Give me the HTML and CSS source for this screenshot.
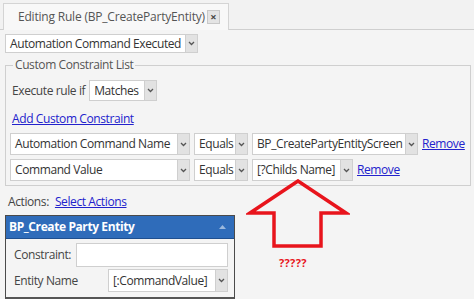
FILE: index.html
```html
<!DOCTYPE html>
<html>
<head>
    <title>Editing Rule</title>
    <link rel="stylesheet" href="styles.css">
</head>
<body>
    <div class="tab-bar">
        <div class="tab">
            <span class="tab-title">Editing Rule (BP_CreatePartyEntity)</span>
            <span class="tab-close">&#215;</span>
        </div>
    </div>

    <div class="page">
        <div class="dropdown event-select">
            <span class="value">Automation Command Executed</span>
            <span class="arrow"><svg width="7" height="5" viewBox="0 0 7 5"><path d="M1 1 L3.5 3.5 L6 1" fill="none" stroke="#555" stroke-width="1.3"/></svg></span>
        </div>

        <fieldset class="constraint-list">
            <legend>Custom Constraint List</legend>
            <div class="row row-mode">
                <span class="label">Execute rule if</span>
                <div class="dropdown w-matches">
                    <span class="value">Matches</span>
                    <span class="arrow"><svg width="7" height="5" viewBox="0 0 7 5"><path d="M1 1 L3.5 3.5 L6 1" fill="none" stroke="#555" stroke-width="1.3"/></svg></span>
                </div>
            </div>
            <div class="row row-add">
                <a class="link" href="#">Add Custom Constraint</a>
            </div>
            <div class="row row-constraint">
                <div class="dropdown w-field">
                    <span class="value">Automation Command Name</span>
                    <span class="arrow"><svg width="7" height="5" viewBox="0 0 7 5"><path d="M1 1 L3.5 3.5 L6 1" fill="none" stroke="#555" stroke-width="1.3"/></svg></span>
                </div>
                <div class="dropdown w-op">
                    <span class="value">Equals</span>
                    <span class="arrow"><svg width="7" height="5" viewBox="0 0 7 5"><path d="M1 1 L3.5 3.5 L6 1" fill="none" stroke="#555" stroke-width="1.3"/></svg></span>
                </div>
                <div class="dropdown w-screen">
                    <span class="value">BP_CreatePartyEntityScreen</span>
                    <span class="arrow"><svg width="7" height="5" viewBox="0 0 7 5"><path d="M1 1 L3.5 3.5 L6 1" fill="none" stroke="#555" stroke-width="1.3"/></svg></span>
                </div>
                <a class="link" href="#">Remove</a>
            </div>
            <div class="row row-constraint">
                <div class="dropdown w-field">
                    <span class="value">Command Value</span>
                    <span class="arrow"><svg width="7" height="5" viewBox="0 0 7 5"><path d="M1 1 L3.5 3.5 L6 1" fill="none" stroke="#555" stroke-width="1.3"/></svg></span>
                </div>
                <div class="dropdown w-op">
                    <span class="value">Equals</span>
                    <span class="arrow"><svg width="7" height="5" viewBox="0 0 7 5"><path d="M1 1 L3.5 3.5 L6 1" fill="none" stroke="#555" stroke-width="1.3"/></svg></span>
                </div>
                <div class="dropdown w-child">
                    <span class="value">[?Childs Name]</span>
                    <span class="arrow"><svg width="7" height="5" viewBox="0 0 7 5"><path d="M1 1 L3.5 3.5 L6 1" fill="none" stroke="#555" stroke-width="1.3"/></svg></span>
                </div>
                <a class="link" href="#">Remove</a>
            </div>
        </fieldset>

        <div class="actions-line">
            <span class="label">Actions:</span>
            <a class="link" href="#">Select Actions</a>
        </div>

        <div class="action-panel">
            <div class="panel-header">
                <span>BP_Create Party Entity</span>
                <svg class="collapse" width="7" height="4" viewBox="0 0 7 4"><path d="M0 4 L3.5 0 L7 4 Z" fill="#9bb8dd"/></svg>
            </div>
            <div class="panel-body">
                <div class="field-row">
                    <span class="label">Constraint:</span>
                    <div class="text-input"></div>
                </div>
                <div class="field-row">
                    <span class="label">Entity Name</span>
                    <div class="dropdown w-entity">
                        <span class="value">[:CommandValue]</span>
                        <span class="arrow"><svg width="7" height="5" viewBox="0 0 7 5"><path d="M1 1 L3.5 3.5 L6 1" fill="none" stroke="#555" stroke-width="1.3"/></svg></span>
                    </div>
                </div>
            </div>
        </div>

        <!-- annotation drawn over the screenshot -->
        <svg class="annotation-arrow" width="104" height="70" viewBox="0 0 104 70">
            <path d="M52 2 L4 34 L28 34 L28 67 L75 67 L75 34 L100 34 Z" fill="none" stroke="#e8141c" stroke-width="3.5" stroke-linejoin="miter"/>
        </svg>
        <span class="annotation-text">?????</span>
    </div>
</body>
</html>
```

FILE: styles.css
```css
body {
    margin: 0;
    background-color: #f4f4f4;
    font-family: "Open Sans", "Noto Sans", sans-serif;
    font-size: 12px;
    letter-spacing: -0.4px;
    line-height: 16px;
    color: #333;
    width: 474px;
    height: 299px;
    overflow: hidden;
}

.tab-bar {
    height: 27px;
    padding: 2px 0 0 3px;
    border-bottom: 1px solid #cfcfcf;
    background-color: #f2f2f2;
}

.tab {
    width: 226px;
    height: 27px;
    padding: 0 8px 0 14px;
    box-sizing: border-box;
    display: flex;
    align-items: center;
    justify-content: space-between;
    background-color: #f8f8f8;
    border: 1px solid #d4d4d4;
    border-bottom: none;
    position: relative;
    top: 1px;
    color: #555;
}

.tab-title {
    white-space: nowrap;
    letter-spacing: -0.2px;
}

.tab-close {
    width: 11px;
    height: 12px;
    line-height: 11px;
    text-align: center;
    font-size: 11px;
    font-weight: bold;
    letter-spacing: 0;
    color: #444;
    background-color: #e4e4e4;
    border: 1px solid #c8c8c8;
}

.page {
    padding: 4px 5px 0 5px;
    position: relative;
}

/* dropdowns */
.dropdown {
    display: inline-flex;
    align-items: stretch;
    height: 20px;
    background-color: #fff;
    border: 1px solid #cfcfcf;
    box-sizing: border-box;
}

.dropdown .value {
    flex: 1;
    padding: 0 3px 0 4px;
    display: flex;
    align-items: center;
    white-space: nowrap;
    overflow: hidden;
    color: #333;
}

.dropdown .arrow {
    width: 11px;
    background-color: #e2e2e2;
    border-left: 1px solid #cfcfcf;
    display: flex;
    align-items: center;
    justify-content: center;
}

.event-select {
    width: 193px;
    height: 19px;
}

.w-matches { width: 68px; height: 21px; }
.w-field { width: 180px; height: 22px; }
.w-op { width: 54px; height: 22px; }
.w-screen { width: 166px; height: 22px; }
.w-child { width: 101px; height: 22px; }
.w-entity { width: 120px; height: 23px; }

/* constraint list */
.constraint-list {
    margin: 4px 0 0 0;
    padding: 7px 3px 4px 4px;
    border: 1px solid #cfcfcf;
    width: 457px;
    box-sizing: content-box;
}

.constraint-list legend {
    padding: 0 2px;
    margin-left: 3px;
    color: #555;
}

.row {
    display: flex;
    align-items: center;
    gap: 4px;
}

.row .label {
    margin-left: 2px;
    color: #444;
}

.row-add {
    height: 16px;
    margin: 10px 0 6px 0;
    padding-left: 2px;
}

.row-constraint {
    margin-bottom: 4px;
}

.row-constraint:last-child {
    margin-bottom: 0;
}

.link {
    color: #2222cc;
    text-decoration: underline;
}

/* actions */
.actions-line {
    margin-top: 7px;
    padding-left: 3px;
    height: 17px;
    display: flex;
    align-items: center;
    gap: 6px;
    color: #444;
}

.action-panel {
    margin-top: 5px;
    width: 228px;
    border: 1px solid #4a4a4a;
    border-bottom: 3px solid #555;
    background-color: #f4f4f4;
}

.panel-header {
    height: 22px;
    background-color: #2f6cba;
    color: #fff;
    font-weight: bold;
    display: flex;
    align-items: center;
    justify-content: space-between;
    padding: 0 8px 0 3px;
    border-bottom: 1px solid #1f4f8f;
}

.panel-body {
    padding: 4px 6px 3px 8px;
}

.field-row {
    display: flex;
    align-items: center;
    justify-content: space-between;
    margin-bottom: 2px;
}

.field-row .label {
    color: #444;
}

.text-input {
    width: 152px;
    height: 24px;
    background-color: #fff;
    border: 1px solid #cfcfcf;
    box-sizing: border-box;
}

/* annotation overlay */
.annotation-arrow {
    position: absolute;
    left: 246px;
    top: 149px;
}

.annotation-text {
    position: absolute;
    left: 279px;
    top: 225px;
    color: #e8141c;
    font-weight: bold;
    font-size: 11px;
    letter-spacing: 0.3px;
}
```
